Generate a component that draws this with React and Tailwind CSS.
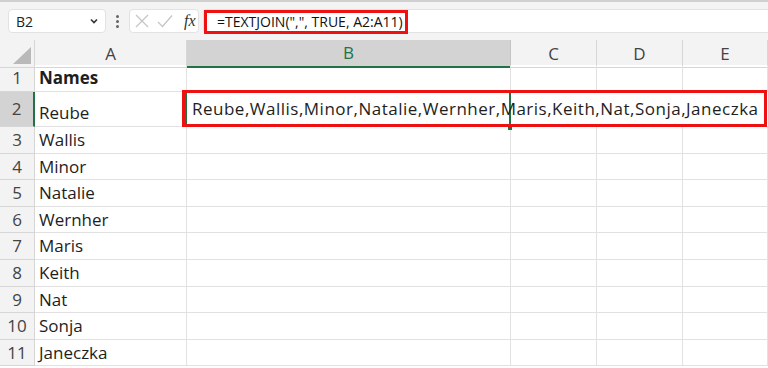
import React from 'react';

const font = { fontFamily: '"Open Sans", "Noto Sans", sans-serif' };

const names = ['Reube', 'Wallis', 'Minor', 'Natalie', 'Wernher', 'Maris', 'Keith', 'Nat', 'Sonja', 'Janeczka'];
const cols = ['A', 'B', 'C', 'D', 'E'];
const grid = 'grid grid-cols-[35px_152px_324px_86px_86px_85px]';

const Toolbar = () => (
  <div className="h-[40px] border-t-2 border-[#d0d0d0] bg-[#f3f3f3] flex items-center">
    {/* Name box */}
    <div className="ml-[8px] w-[98px] h-[24px] bg-white rounded-[4px] border border-[#e2e2e2] flex items-center justify-between pl-[7px] pr-[6px]">
      <span className="text-[14px] text-[#222]">B2</span>
      <svg width="10" height="10" viewBox="0 0 10 10">
        <path d="M2 3.5 L5 6.5 L8 3.5" fill="none" stroke="#333" strokeWidth="1.6" />
      </svg>
    </div>
    <div className="w-[23px] flex flex-col items-center gap-[2px]">
      <span className="w-[3px] h-[3px] rounded-full bg-[#666]" />
      <span className="w-[3px] h-[3px] rounded-full bg-[#666]" />
      <span className="w-[3px] h-[3px] rounded-full bg-[#666]" />
    </div>
    {/* cancel / enter / fx */}
    <div className="w-[70px] h-[24px] bg-white rounded-[4px] border border-[#e2e2e2] flex items-center pl-[5px] gap-[8px]">
      <svg width="14" height="14" viewBox="0 0 14 14">
        <path d="M1 1 L13 13 M13 1 L1 13" stroke="#c4c4c4" strokeWidth="1.2" />
      </svg>
      <svg width="16" height="14" viewBox="0 0 16 14">
        <path d="M1 8 L5.5 12.5 L15 1.5" fill="none" stroke="#c4c4c4" strokeWidth="1.2" />
      </svg>
      <span className="text-[16px] italic text-[#333] ml-[3px]" style={{ fontFamily: '"Liberation Serif", serif' }}>fx</span>
    </div>
    {/* formula bar */}
    <div className="ml-[4px] flex-1 h-[24px] bg-white border-y border-l border-[#e2e2e2] rounded-l-[4px] relative flex items-center">
      <div className="absolute left-[0px] top-[0px] w-[204px] h-[24px] border-[3px] border-[#ee1111]" />
      <span className="pl-[13px] text-[14px] text-[#111]">=TEXTJOIN(",", TRUE, A2:A11)</span>
    </div>
  </div>
);

const ColHeader = () => (
  <div className={`${grid} h-[25px] bg-[#f3f3f3]`}>
    <div className="relative border-r border-b border-[#d6d6d6]">
      <svg className="absolute right-[3px] bottom-[3px]" width="18" height="17" viewBox="0 0 18 17">
        <polygon points="18,0 18,17 0,17" fill="#b9b9b9" />
      </svg>
    </div>
    {cols.map((c) =>
      c === 'B' ? (
        <div key={c} className="bg-[#d3d3d3] border-r border-[#c4c4c4] border-b-2 border-b-[#217346] flex items-center justify-center text-[17px] text-[#217346]">
          {c}
        </div>
      ) : (
        <div key={c} className="border-r border-b border-[#d6d6d6] flex items-center justify-center text-[17px] text-[#444]">
          {c}
        </div>
      )
    )}
  </div>
);

const RowNum = ({ n, selected }) => (
  <div
    className={`flex items-center justify-center text-[17px] text-[#444] border-b border-[#d6d6d6] ${
      selected ? 'bg-[#d3d3d3] border-r-2 border-r-[#217346]' : 'bg-[#f3f3f3] border-r border-r-[#d6d6d6]'
    }`}
  >
    {n}
  </div>
);

const Cell = ({ children, bold }) => (
  <div className={`border-r border-b border-[#e1e1e1] flex items-center pl-[4px] text-[17px] text-[#1e1e1e] ${bold ? 'font-bold' : ''}`}>
    {children}
  </div>
);

export default function App() {
  return (
    <div className="w-[768px] h-[368px] overflow-hidden bg-white" style={font}>
      <Toolbar />
      <ColHeader />
      {/* row 1 */}
      <div className={`${grid} h-[27px]`}>
        <RowNum n={1} />
        <Cell bold>Names</Cell>
        <Cell />
        <Cell />
        <Cell />
        <Cell />
      </div>
      {/* row 2 */}
      <div className={`${grid} h-[35px]`}>
        <RowNum n={2} selected />
        <div className="border-r border-b border-[#e1e1e1] flex items-end pb-[1px] pl-[4px] text-[17px] text-[#1e1e1e]">Reube</div>
        <div className="col-span-4 relative border-b border-[#e1e1e1]">
          <div className="absolute left-[-2px] top-0 bottom-0 w-[2px] bg-[#217346]" />
          <div className="absolute left-[322px] top-0 bottom-[-3px] w-[2px] bg-[#217346]" />
          <div className="absolute left-[321px] bottom-[-4px] w-[4px] h-[4px] bg-[#217346]" />
          <div className="absolute left-[-5px] top-[-2px] right-[1px] bottom-[-1px] border-[3px] border-[#ee1111]" />
          <div className="absolute left-[5px] top-0 bottom-0 flex items-center whitespace-nowrap text-[17px] tracking-[0.5px] text-[#1e1e1e]">
            Reube,Wallis,Minor,Natalie,Wernher,Maris,Keith,Nat,Sonja,Janeczka
          </div>
        </div>
      </div>
      {names.slice(1).map((nm, i) => (
        <div key={nm} className={`${grid} h-[26.6px]`}>
          <RowNum n={i + 3} />
          <Cell>{nm}</Cell>
          <Cell />
          <Cell />
          <Cell />
          <Cell />
        </div>
      ))}
    </div>
  );
}
